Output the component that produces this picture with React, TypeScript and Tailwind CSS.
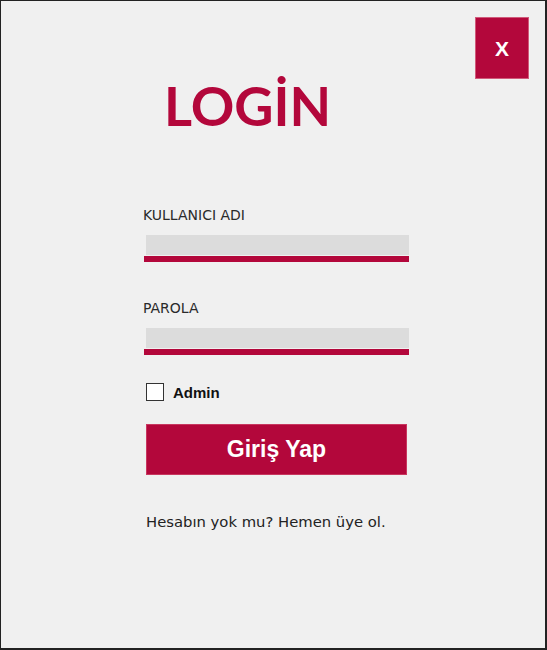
import React from "react";

export default function App() {
  return (
    <div className="w-[547px] h-[650px] bg-[#f0f0f0] border-l border-t border-r-2 border-b-2 border-[#222222] flex flex-col">
      <div className="flex justify-end pt-[16px] pr-[16px]">
        <button className="w-[54px] h-[62px] bg-[#b3073b] border border-[#d05a7a] flex items-center justify-center text-white text-[21px] font-bold leading-none [font-family:'Liberation_Sans',Arial,sans-serif]">
          X
        </button>
      </div>
      <div className="pl-[142px] flex flex-col">
        <div className="ml-[21px] h-[54px] leading-[54px] text-[54px] font-bold text-[#b3073b] [font-family:Lato,'Noto_Sans',sans-serif]">
          LOGİN
        </div>
        <div className="mt-[74px] h-[16px] leading-[16px] text-[14px] text-[#2a2a2a] [font-family:'DejaVu_Sans',sans-serif]">
          KULLANICI ADI
        </div>
        <div className="mt-[12px] ml-[1px] flex flex-col">
          <div className="ml-[2px] w-[263px] h-[20px] bg-[#dcdcdc]"></div>
          <div className="mt-[1px] w-[265px] h-[6px] bg-[#b3073b]"></div>
        </div>
        <div className="mt-[38px] h-[16px] leading-[16px] text-[14px] text-[#2a2a2a] [font-family:'DejaVu_Sans',sans-serif]">
          PAROLA
        </div>
        <div className="mt-[12px] ml-[1px] flex flex-col">
          <div className="ml-[2px] w-[263px] h-[20px] bg-[#dcdcdc]"></div>
          <div className="mt-[1px] w-[265px] h-[6px] bg-[#b3073b]"></div>
        </div>
        <label className="mt-[27px] ml-[3px] flex items-center gap-[9px]">
          <span className="w-[18px] h-[18px] bg-white border-[1.5px] border-[#333333] box-border"></span>
          <span className="mt-[2px] leading-[18px] text-[15px] font-bold text-[#111111] [font-family:'Liberation_Sans',Arial,sans-serif]">
            Admin
          </span>
        </label>
        <button className="mt-[22px] ml-[3px] w-[261px] h-[51px] bg-[#b3073b] border border-[#c8375f] flex items-center justify-center text-white text-[23px] font-bold [font-family:'Liberation_Sans',Arial,sans-serif]">
          Giriş Yap
        </button>
        <div className="mt-[39px] ml-[3px] h-[16px] leading-[16px] text-[14.8px] text-[#222222] [font-family:'DejaVu_Sans',sans-serif]">
          Hesabın yok mu? Hemen üye ol.
        </div>
      </div>
    </div>
  );
}
